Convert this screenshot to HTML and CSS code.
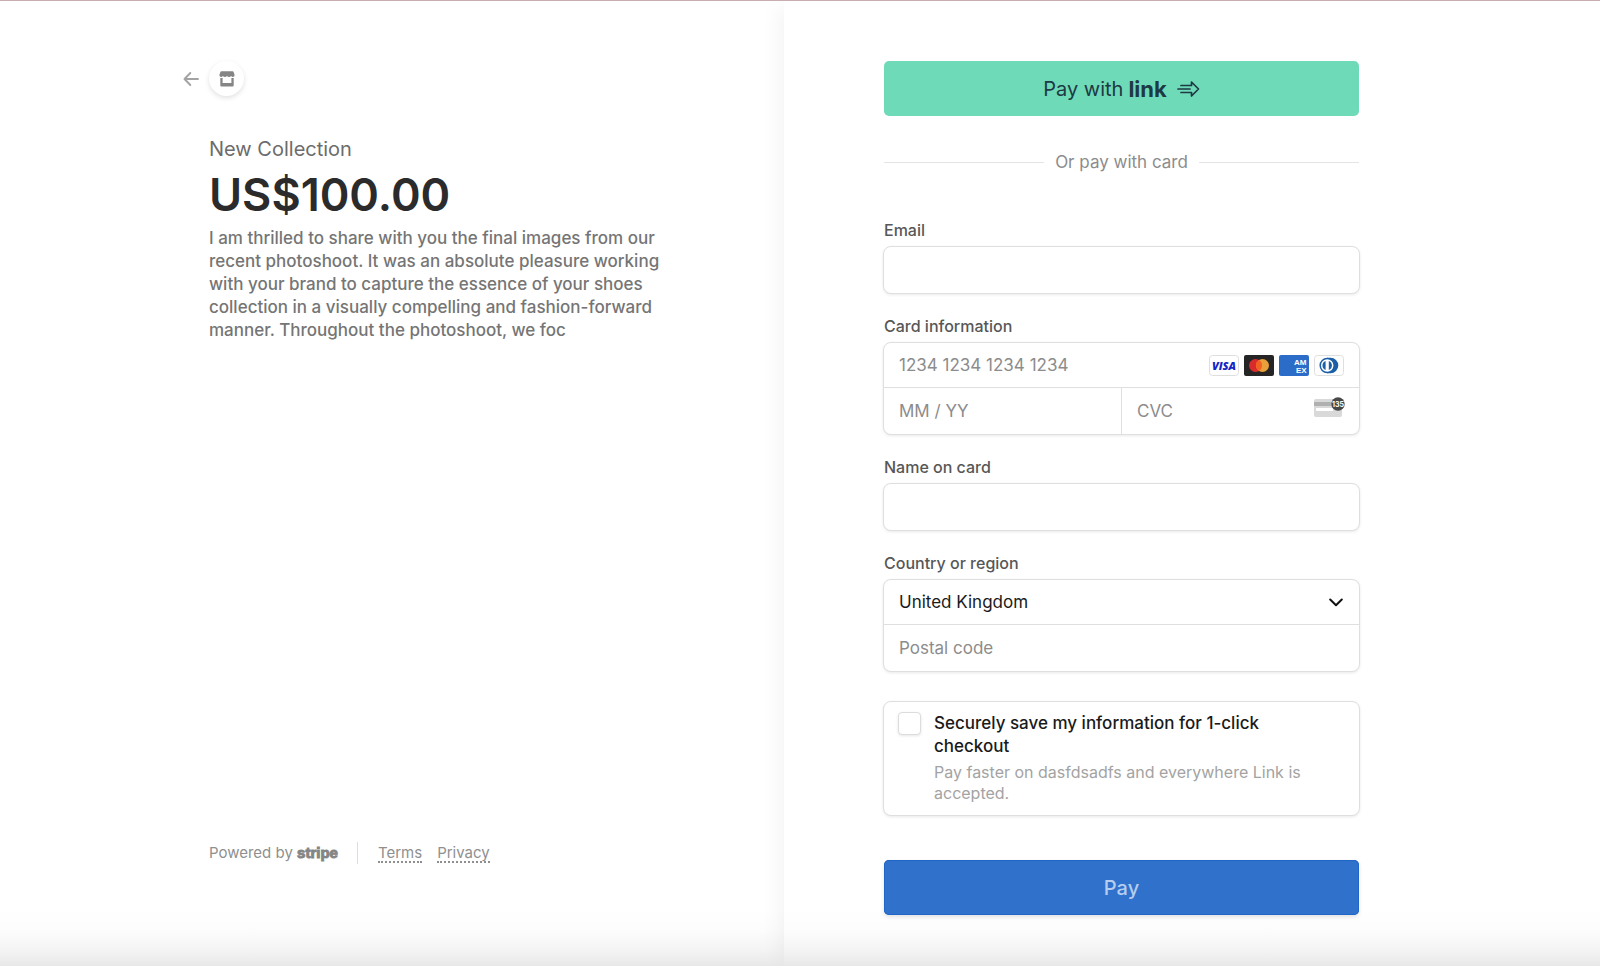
FILE: index.html
```html
<!DOCTYPE html>
<html lang="en">
<head>
<meta charset="utf-8">
<meta name="viewport" content="width=device-width, initial-scale=1">
<title>New Collection – Checkout</title>
<link rel="stylesheet" href="styles.css">
</head>
<body>
<div class="checkout">
  <section class="summary">
    <div class="column">
      <header class="merchant">
        <a class="back" href="#" aria-label="Back">
          <svg width="16" height="16" viewBox="0 0 16 16" fill="none" stroke="#a3a3a3" stroke-width="1.9" stroke-linecap="round" stroke-linejoin="round"><path d="M15 8H1.500M7.300 2L1.500 8l5.800 6"/></svg>
        </a>
        <span class="avatar">
          <svg width="16" height="16" viewBox="0 0 16 16" fill="#858585"><path d="M2.4 0.3h11.2c.5 0 .8.2 1 .6l.9 2.5c.3 1.4-.5 2.5-1.6 2.5-.8 0-1.4-.3-1.8-.9-.5.6-1.2.9-2 .9s-1.6-.3-2.1-.9c-.5.6-1.3.9-2.1.9s-1.5-.3-2-.9c-.4.6-1 .9-1.8.9C1 5.9.2 4.8.5 3.400L1.400.9c.2-.4.5-.6 1-.6z"/><path d="M1.300 7h2.300v5h8.800V7h2.300v7.200c0 .9-.5 1.400-1.400 1.400H2.700c-.9 0-1.400-.5-1.400-1.400z"/></svg>
        </span>
      </header>
      <h1 class="product">New Collection</h1>
      <p class="price">US$100.00</p>
      <p class="description">I am thrilled to share with you the final images from our recent photoshoot. It was an absolute pleasure working with your brand to capture the essence of your shoes collection in a visually compelling and fashion-forward manner. Throughout the photoshoot, we foc</p>
      <footer class="footer">
        <span class="powered">Powered by <b class="stripe">stripe</b></span>
        <nav class="legal"><a href="#">Terms</a><a href="#">Privacy</a></nav>
      </footer>
    </div>
  </section>
  <main class="payment">
    <form class="column form">
      <button class="link-button" type="button"><span>Pay with</span><b class="link-word">link</b>
        <svg width="23" height="18" viewBox="0 0 23 18" fill="none" stroke="#1d3944" stroke-width="1.700" stroke-linejoin="round" stroke-linecap="round"><path d="M4 5.500h10.500V2l7 7-7 7v-3.500H4M1 9h12"/></svg>
      </button>
      <div class="divider">Or pay with card</div>

      <div class="field">
        <label for="email">Email</label>
        <div class="box"><input id="email" class="single" type="email"></div>
      </div>

      <div class="field">
        <label for="card">Card information</label>
        <div class="box">
          <div class="row">
            <input id="card" type="text" placeholder="1234 1234 1234 1234">
            <span class="brands">
              <svg width="30" height="21" viewBox="0 0 30 21"><rect x=".5" y=".5" width="29" height="20" rx="3" fill="#fff" stroke="#dedede"/><text x="15" y="14.500" text-anchor="middle" class="visa">VISA</text></svg>
              <svg width="30" height="21" viewBox="0 0 30 21"><rect width="30" height="21" rx="2" fill="#252525"/><circle cx="11.500" cy="10.500" r="6.500" fill="#d92b2b"/><circle cx="18.500" cy="10.500" r="6.500" fill="#e9a03b"/><path d="M15 5a6.500 6.500 0 0 1 0 11 6.500 6.500 0 0 1 0-11z" fill="#f26122"/></svg>
              <svg width="30" height="21" viewBox="0 0 30 21"><rect width="30" height="21" rx="2" fill="#2c6cc9"/><text class="amex"><tspan x="15" y="10">AM</tspan><tspan x="17" y="18">EX</tspan></text></svg>
              <svg width="30" height="21" viewBox="0 0 30 21"><rect x=".5" y=".5" width="29" height="20" rx="3" fill="#fff" stroke="#dedede"/><path d="M13 2.700h3.500a7.800 7.800 0 0 1 0 15.600H13z" fill="#1c5fa8"/><circle cx="13.200" cy="10.500" r="7" fill="#fff" stroke="#1c5fa8" stroke-width="1.500"/><path d="M11.600 6v9a4.800 4.800 0 0 1 0-9zM14.800 6v9a4.800 4.800 0 0 0 0-9z" fill="#1c5fa8"/></svg>
            </span>
          </div>
          <div class="row split">
            <div class="cell"><input type="text" placeholder="MM / YY" aria-label="Expiration"></div>
            <div class="cell">
              <input type="text" placeholder="CVC" aria-label="CVC">
              <svg class="cvc-icon" width="31" height="22" viewBox="0 0 31 22"><rect y="2" width="28" height="18" rx="2" fill="#d9d9d9"/><rect y="5" width="28" height="4" fill="#b0b0b0"/><rect x="2" y="11" width="17" height="3" fill="#fff"/><circle cx="24" cy="7" r="6.700" fill="#484848"/><text x="24" y="9.700" text-anchor="middle" class="cvc-digits">135</text></svg>
            </div>
          </div>
        </div>
      </div>

      <div class="field">
        <label for="name">Name on card</label>
        <div class="box"><input id="name" class="single" type="text"></div>
      </div>

      <div class="field">
        <label for="country">Country or region</label>
        <div class="box">
          <div class="row">
            <select id="country"><option>United Kingdom</option></select>
            <svg class="chevron" width="14" height="9" viewBox="0 0 14 9" fill="none" stroke="#111" stroke-width="2" stroke-linecap="round" stroke-linejoin="round"><path d="M1.200 1.500L7 7.300l5.800-5.800"/></svg>
          </div>
          <div class="row"><input type="text" placeholder="Postal code" aria-label="Postal code"></div>
        </div>
      </div>

      <div class="box save">
        <input id="save" type="checkbox">
        <div>
          <label for="save">Securely save my information for 1-click checkout</label>
          <p>Pay faster on dasfdsadfs and everywhere Link is accepted.</p>
        </div>
      </div>

      <button class="pay" type="submit">Pay</button>
    </form>
  </main>
</div>
</body>
</html>
```
FILE: styles.css
```css
* { box-sizing: border-box; }

body {
  margin: 0;
  font-family: Inter, "Liberation Sans", sans-serif;
  font-size: 17px;
  color: #1a1a1a;
}

h1, p { margin: 0; }

.checkout {
  display: grid;
  grid-template-columns: 49fr 51fr;
  min-height: 100vh;
  border-top: 1px solid #c7adb1;
  background: linear-gradient(to top, #e8e8e8, #f4f4f4 16px, #fcfcfc 34px, #fff 56px);
  overflow: hidden;
}

.summary, .payment { display: flex; padding: 60px 100px 50px; }
.summary { justify-content: flex-end; }
.payment { box-shadow: -10px 0 20px -6px rgba(0, 0, 0, 0.05); }
.column { display: flex; flex-direction: column; width: 100%; max-width: 475px; }

/* Order summary */
.merchant { display: flex; align-items: center; gap: 10px; margin-left: -26px; }
.back { display: flex; }
.avatar {
  display: flex;
  align-items: center;
  justify-content: center;
  width: 35px;
  height: 35px;
  border-radius: 50%;
  background: #fff;
  box-shadow: 0 2px 5px rgba(0, 0, 0, 0.12);
}
.product { margin-top: 40px; font-size: 20px; line-height: 26px; font-weight: 400; color: #6c6c6c; }
.price { margin-top: 4px; font-size: 45px; line-height: 58px; font-weight: 600; color: #2b2b2b; }
.description { margin-top: 3px; line-height: 23px; font-weight: 500; color: #757575; }

.footer { display: flex; align-items: center; margin-top: auto; padding-bottom: 52px; font-size: 15px; line-height: 22px; color: #8f8f8f; }
.powered { padding-right: 19px; border-right: 1px solid #dedede; }
.stripe { font-family: "Liberation Sans", sans-serif; font-size: 15px; font-weight: 700; color: #858585; -webkit-text-stroke: 1px #858585; }
.legal { display: flex; gap: 15px; padding-left: 20px; }
.legal a { color: inherit; line-height: 17px; text-decoration: none; border-bottom: 2px dotted #8f8f8f; }

/* Payment form */
.link-button, .pay { height: 55px; border: 0; border-radius: 5px; font: inherit; font-size: 20px; }
.link-button { display: flex; align-items: center; justify-content: center; background: #6fdab7; color: #1d3944; }
.link-word { margin: 0 10px 0 5px; font-size: 22px; font-weight: 700; }
.divider { display: flex; align-items: center; gap: 11px; margin-top: 34px; line-height: 24px; color: #8c8c8c; }
.divider::before, .divider::after { content: ""; flex: 1; height: 1px; background: #e4e4e4; }

.field { margin-top: 22px; }
.divider + .field { margin-top: 46px; }
.field > label { display: block; margin-bottom: 6px; font-size: 16px; line-height: 20px; font-weight: 500; color: #575757; }

.box {
  margin: 0 -1px;
  border: 1px solid #dfdfdf;
  border-radius: 8px;
  background: #fff;
  box-shadow: 0 1px 3px rgba(0, 0, 0, 0.09);
}
.row { display: flex; align-items: center; height: 44px; }
.row + .row { height: 47px; border-top: 1px solid #dfdfdf; }
.cell { display: flex; flex: 1; align-items: center; height: 100%; }
.cell + .cell { border-left: 1px solid #dfdfdf; }

.box input:not([type="checkbox"]), .box select {
  flex: 1;
  min-width: 0;
  width: 100%;
  height: 44px;
  padding: 0 15px;
  border: 0;
  background: none;
  font: inherit;
  color: #1a1a1a;
  appearance: none;
}
.box input.single { display: block; height: 46px; }
input::placeholder { color: #8c8c8c; opacity: 1; }
.brands { display: flex; gap: 5px; margin-right: 15px; }
.cvc-icon { margin: 0 14px 6px 0; }
.chevron { margin-right: 16px; }

.visa { font: italic 800 11px "Open Sans", sans-serif; fill: #1624c4; }
.amex { font: 700 8px/8px "Liberation Sans", sans-serif; fill: #fff; }
.cvc-digits { font: 700 7px Inter, sans-serif; fill: #fff; }

.save { display: flex; align-items: flex-start; gap: 13px; margin-top: 29px; padding: 10px 50px 11px 14px; }
.save input {
  flex: none;
  width: 23px;
  height: 23px;
  margin: 0;
  appearance: none;
  border: 1px solid #dcdcdc;
  border-radius: 4px;
  background: #fff;
  box-shadow: 0 1px 3px rgba(0, 0, 0, 0.1);
}
.save label { display: block; line-height: 23px; font-weight: 500; }
.save p { margin-top: 4px; font-size: 16px; line-height: 21px; color: #a3a3a3; }

.pay { margin-top: 44px; background: #3071cc; font-weight: 500; color: #b5cdee; box-shadow: inset 0 0 0 1px #1f66c8, 0 2px 4px rgba(0, 0, 0, 0.12); }
```
